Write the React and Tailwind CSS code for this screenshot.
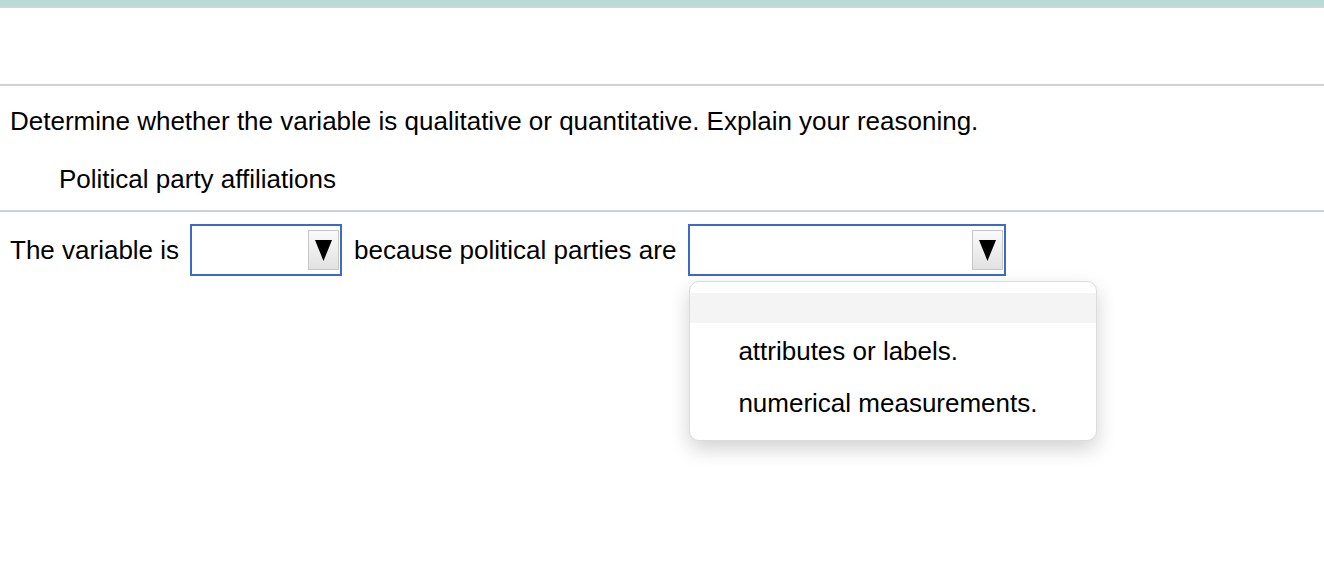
import React from "react";

const Arrow = () => (
  <svg width="17" height="21" viewBox="0 0 17 21">
    <polygon points="0,0 17,0 8.5,21" fill="#000" />
  </svg>
);

const SelectBox = ({ width }) => (
  <div
    className={`relative flex h-[52px] items-center justify-end border-2 border-[#3a6bc8] bg-white pr-[1px] ${width}`}
  >
    <div className="flex h-[40px] w-[31px] items-center justify-center border border-[#c6c6c6] bg-gradient-to-b from-[#fafafa] to-[#e2e2e2]">
      <Arrow />
    </div>
  </div>
);

export default function App() {
  return (
    <div
      className="relative min-h-[562px] w-full bg-white text-black"
      style={{ fontFamily: '"Liberation Sans", Arial, sans-serif' }}
    >
      {/* top strip */}
      <div className="h-[6px] bg-[#b9dbd6]" />
      <div className="h-[2px] bg-[#cfd3dd]" />

      <div className="h-[76px]" />
      <div className="h-[2px] bg-[#cdd0db]" />

      {/* question */}
      <div className="pt-[20px] pl-[10px] text-[26px] leading-[30px]">
        Determine whether the variable is qualitative or quantitative. Explain your reasoning.
      </div>
      <div className="pt-[28px] pl-[59px] text-[26px] leading-[30px]">Political party affiliations</div>

      <div className="mt-[16px] h-[2px] bg-[#cdd0db]" />

      {/* answer row */}
      <div className="flex items-center pt-[12px] pl-[10px] text-[26px] leading-[30px]">
        <span>The variable is</span>
        <div className="ml-[11px]">
          <SelectBox width="w-[152px]" />
        </div>
        <span className="ml-[12px]">because political parties are</span>
        <div className="relative ml-[12px]">
          <SelectBox width="w-[318px]" />

          {/* open menu */}
          <div className="absolute top-[57px] left-[1px] z-10 w-[408px] overflow-hidden rounded-[10px] border border-[#dcdcdc] bg-white pt-[11px] pb-[10px] shadow-[0_8px_20px_rgba(0,0,0,0.18)]">
            <div className="h-[30px] bg-[#f4f4f4]" />
            <div className="flex h-[54px] items-center pl-[48px] pt-[1px]">attributes or labels.</div>
            <div className="flex h-[54px] items-center pl-[48px] -mt-[1px]">numerical measurements.</div>
          </div>
        </div>
      </div>
    </div>
  );
}
